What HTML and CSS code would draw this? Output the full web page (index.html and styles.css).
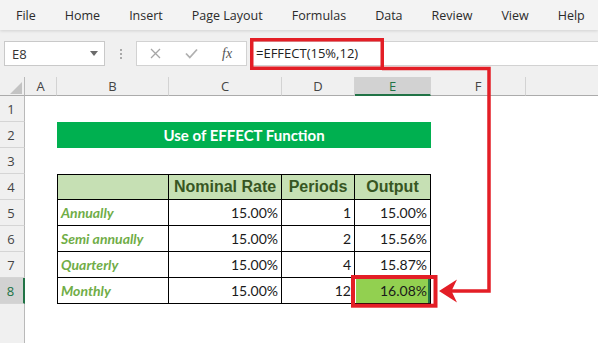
FILE: index.html
```html
<!DOCTYPE html>
<html lang="en">
<head>
<meta charset="utf-8">
<title>Use of EFFECT Function</title>
<link rel="stylesheet" href="styles.css">
</head>
<body>
<div class="app">
  <nav class="menubar">
    <span>File</span><span>Home</span><span>Insert</span><span>Page Layout</span><span>Formulas</span><span>Data</span><span>Review</span><span>View</span><span>Help</span>
  </nav>
  <div class="fbar">
    <div class="namebox"><span>E8</span><svg class="dd" width="8" height="5" viewBox="0 0 8 5"><polygon points="0,0 8,0 4,5" fill="#6b6b6b"/></svg></div>
    <div class="grip"><i></i><i></i><i></i></div>
    <div class="fxbox">
      <svg class="ico-x" width="11" height="11" viewBox="0 0 11 11"><path d="M1 1 L10 10 M10 1 L1 10" stroke="#a6a6a6" stroke-width="1.3" fill="none"/></svg>
      <svg class="ico-ok" width="13" height="11" viewBox="0 0 13 11"><path d="M1 5.5 L4.8 9.5 L12 1.5" stroke="#b0b0b0" stroke-width="1.8" fill="none"/></svg>
      <span class="fx">fx</span>
    </div>
    <div class="finput">=EFFECT(15%,12)</div>
  </div>
  <div class="sheet">
    <div class="corner"><svg width="25" height="19" viewBox="0 0 25 19"><polygon points="22,5 22,17 10,17" fill="#c3c3c3"/></svg></div>
    <div class="ch">A</div><div class="ch">B</div><div class="ch">C</div><div class="ch">D</div><div class="ch sel">E</div><div class="ch">F</div><div class="ch last"></div>

    <div class="rh">1</div><div class="rest-all"></div>
    <div class="rh">2</div><div></div><div class="title">Use of EFFECT Function</div><div class="rest"></div>
    <div class="rh">3</div><div class="rest-all"></div>

    <div class="rh">4</div><div></div>
    <div class="t top first hd"></div><div class="t top hd">Nominal Rate</div><div class="t top hd">Periods</div><div class="t top hd">Output</div><div class="rest"></div>

    <div class="rh">5</div><div></div>
    <div class="t first lbl">Annually</div><div class="t num">15.00%</div><div class="t num">1</div><div class="t num">15.00%</div><div class="rest"></div>

    <div class="rh">6</div><div></div>
    <div class="t first lbl">Semi annually</div><div class="t num">15.00%</div><div class="t num">2</div><div class="t num">15.56%</div><div class="rest"></div>

    <div class="rh">7</div><div></div>
    <div class="t first lbl">Quarterly</div><div class="t num">15.00%</div><div class="t num">4</div><div class="t num">15.87%</div><div class="rest"></div>

    <div class="rh rsel">8</div><div></div>
    <div class="t first lbl">Monthly</div><div class="t num">15.00%</div><div class="t num">12</div><div class="t num active">16.08%</div><div class="rest"></div>

    <div class="rh blank"></div><div class="rest-all"></div>
    <div class="rh blank"></div><div class="rest-all"></div>
  </div>

  <svg class="overlay" width="598" height="343" viewBox="0 0 598 343">
    <rect x="251.75" y="39.75" width="130.5" height="28.5" fill="none" stroke="#e31e26" stroke-width="3.5"/>
    <path d="M382 68.5 H489 V291 H450" fill="none" stroke="#e31e26" stroke-width="3.5"/>
    <polygon points="439,291 457,279.5 451.5,291 457,302.5" fill="#e31e26"/>
    <rect x="353" y="277" width="82.5" height="28.7" fill="none" stroke="#e31e26" stroke-width="4"/>
  </svg>
</div>
</body>
</html>
```
FILE: styles.css
```css
* {
  box-sizing: border-box;
  margin: 0;
  padding: 0;
}

html, body {
  width: 598px;
  height: 343px;
  overflow: hidden;
}

body {
  background: #ffffff;
  font-family: "Open Sans", "Noto Sans", sans-serif;
  color: #333333;
}

.app {
  position: relative;
  width: 598px;
  height: 343px;
  background: #f0f0f0;
}

.menubar {
  position: relative;
  z-index: 1;
  height: 30px;
  display: flex;
  align-items: center;
  gap: 29px;
  padding-left: 16px;
  font-size: 12.5px;
  color: #2b2b2b;
  background: #f3f3f3;
  box-shadow: 0 1px 3px rgba(0, 0, 0, 0.13);
  white-space: nowrap;
}

.menubar span {
  flex-shrink: 0;
}

.fbar {
  height: 47px;
  display: flex;
  align-items: flex-start;
  padding: 11px 0 0 4px;
}

.namebox {
  width: 101px;
  height: 25px;
  background: #ffffff;
  border: 1px solid #c9c9c9;
  display: flex;
  align-items: center;
  justify-content: space-between;
  padding: 0 6px 0 7px;
  font-size: 13px;
  color: #333;
}

.grip {
  width: 31px;
  height: 25px;
  display: flex;
  flex-direction: column;
  align-items: center;
  justify-content: center;
  gap: 2px;
}

.grip i {
  display: block;
  width: 2px;
  height: 2px;
  background: #a9a9a9;
}

.fxbox {
  width: 111px;
  height: 25px;
  background: #ffffff;
  border: 1px solid #d2d2d2;
  display: flex;
  align-items: center;
  padding-left: 13px;
}

.ico-ok {
  margin-left: 24px;
}

.fx {
  margin-left: 24px;
  font-family: "Liberation Serif", "DejaVu Serif", serif;
  font-style: italic;
  font-size: 14px;
  color: #555555;
}

.finput {
  flex: 1;
  height: 25px;
  margin-left: 3px;
  background: #ffffff;
  border: 1px solid #d2d2d2;
  border-right: none;
  padding-left: 5px;
  font-size: 13px;
  line-height: 23px;
  color: #222;
}

.sheet {
  display: grid;
  grid-template-columns: 25px 32px 112px 113px 73px 76px 95px 1fr;
  grid-template-rows: 19px repeat(10, 26px);
  background: #ffffff;
}

.corner {
  background: #f0f0f0;
  border-right: 1px solid #b9b9b9;
  border-bottom: 1px solid #ababab;
}

.corner svg {
  display: block;
}

.ch {
  background: #f0f0f0;
  border-right: 1px solid #d3d3d3;
  border-bottom: 1px solid #ababab;
  font-size: 13px;
  color: #444;
  text-align: center;
  line-height: 18px;
}

.ch.last {
  border-right: none;
}

.ch.sel {
  background: #d2d2d2;
  color: #217346;
  border-bottom: 2px solid #217346;
}

.rh {
  background: #f0f0f0;
  border-right: 1px solid #b9b9b9;
  border-bottom: 1px solid #d5d5d5;
  font-size: 13px;
  color: #444;
  display: flex;
  align-items: center;
  justify-content: center;
  padding-right: 2px;
}

.rh.rsel {
  background: #d2d2d2;
  color: #217346;
  border-right: 2px solid #217346;
}

.rh.blank {
  border-bottom: none;
}

.rest-all {
  grid-column: 2 / -1;
}

.rest {
  grid-column: 7 / -1;
}

.title {
  grid-column: 3 / 7;
  background: #00b050;
  color: #ffffff;
  font-family: Lato, "Open Sans", sans-serif;
  font-weight: 700;
  font-size: 15px;
  display: flex;
  align-items: center;
  justify-content: center;
}

.t {
  border-right: 1px solid #000000;
  border-bottom: 1px solid #000000;
  display: flex;
  align-items: center;
}

.t.top {
  border-top: 1px solid #000000;
}

.t.first {
  border-left: 1px solid #000000;
}

.hd {
  background: #c6e0b4;
  justify-content: center;
  font-family: "Liberation Sans", Arial, sans-serif;
  font-weight: 700;
  font-size: 16px;
  color: #375623;
}

.lbl {
  padding-left: 3px;
  font-family: Lato, "Open Sans", sans-serif;
  font-style: italic;
  font-weight: 700;
  font-size: 14px;
  color: #70ad47;
}

.num {
  justify-content: flex-end;
  padding-right: 3px;
  font-family: Lato, "Open Sans", sans-serif;
  font-size: 14px;
  color: #1a1a1a;
}

.num.active {
  background: #92d050;
  box-shadow: inset 1px 1px 0 #ffffff, inset -2px 0 0 #217346;
}

.overlay {
  position: absolute;
  left: 0;
  top: 0;
  pointer-events: none;
}
```
